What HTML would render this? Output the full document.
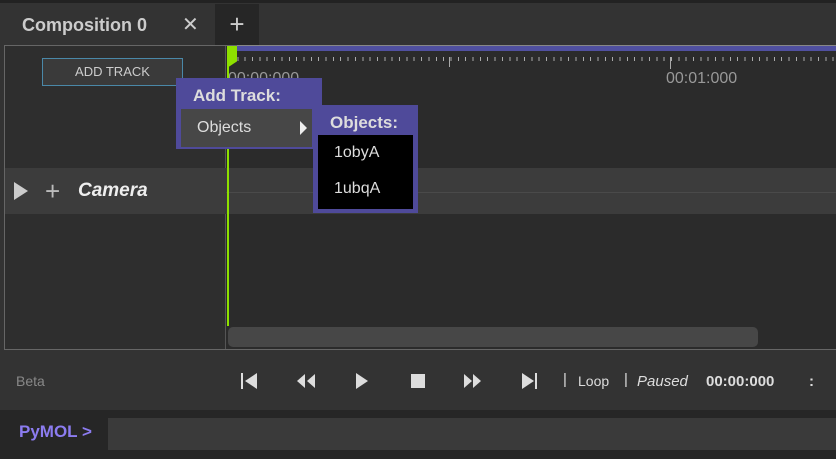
<!DOCTYPE html>
<html><head><style>
*{margin:0;padding:0;box-sizing:border-box}
body{width:836px;height:459px;background:#333;font-family:"Liberation Sans",sans-serif;position:relative;overflow:hidden}
.a{position:absolute}
</style></head><body>
<div class="a" style="left:0;top:0;width:836px;height:3px;background:#222"></div>
<div class="a" style="left:4px;top:3px;width:210px;height:42px;background:#333;color:#ccc;font-weight:bold;font-size:18px;line-height:44px;padding-left:18px">Composition 0<span class="a" style="left:178px;top:0;font-weight:normal;font-size:20px;color:#ccc">✕</span></div>
<div class="a" style="left:215px;top:4px;width:44px;height:41px;background:#262626;color:#ccc;font-size:26px;line-height:40px;text-align:center">+</div>
<div class="a" style="left:4px;top:45px;width:832px;height:305px;border:1px solid #666;border-right:none;background:#2e2e2e"></div>
<div class="a" style="left:225px;top:46px;width:611px;height:303px;background:#2b2b2b;border-left:1px solid #555"></div>
<div class="a" style="left:5px;top:168px;width:831px;height:46px;background:#3c3c3c"></div>
<div class="a" style="left:226px;top:192px;width:610px;height:1px;background:#4a4a4a"></div>
<div class="a" style="left:237px;top:45px;width:599px;height:6px;background:#5050a0;border-top:1px solid #888"></div>
<div class="a" style="left:230px;top:57px;width:606px;height:4px;background:repeating-linear-gradient(90deg,#aaa 0 1px,transparent 1px 7.35px)"></div>
<div class="a" style="left:449px;top:57px;width:1px;height:10px;background:#aaa"></div>
<div class="a" style="left:670px;top:57px;width:1px;height:12px;background:#aaa"></div>
<div class="a" style="left:228px;top:70px;color:#999;font-size:16px">00:00:000</div>
<div class="a" style="left:666px;top:70px;color:#999;font-size:16px">00:01:000</div>
<div class="a" style="left:227px;top:46px;width:10px;height:22px;background:#8ee000;clip-path:polygon(0 0,100% 0,100% 70%,0 100%)"></div>
<div class="a" style="left:227px;top:46px;width:2px;height:280px;background:#8ee000"></div>
<div class="a" style="left:226px;top:326px;width:610px;height:23px;background:#2b2b2b"></div>
<div class="a" style="left:228px;top:327px;width:530px;height:20px;background:#474747;border-radius:5px"></div>
<div class="a" style="left:42px;top:58px;width:141px;height:28px;border:1px solid #4a88a8;background:#3a3a3a;color:#ccc;font-size:13px;line-height:26px;text-align:center">ADD TRACK</div>
<div class="a" style="left:14px;top:182px;width:0;height:0;border-left:14px solid #ccc;border-top:9px solid transparent;border-bottom:9px solid transparent"></div>
<div class="a" style="left:45px;top:176px;color:#bbb;font-size:26px;line-height:30px">+</div>
<div class="a" style="left:78px;top:180px;color:#eee;font-size:19px;font-weight:bold;font-style:italic">Camera</div>
<div class="a" style="left:176px;top:78px;width:146px;height:71px;background:#4f4a9a"></div>
<div class="a" style="left:193px;top:86px;color:#ddd;font-weight:bold;font-size:17px">Add Track:</div>
<div class="a" style="left:181px;top:109px;width:131px;height:38px;background:#474747;color:#ddd;font-size:16px;line-height:38px;padding-left:16px">Objects</div>
<div class="a" style="left:300px;top:121px;width:0;height:0;border-left:7px solid #eee;border-top:7px solid transparent;border-bottom:7px solid transparent"></div>
<div class="a" style="left:313px;top:105px;width:105px;height:108px;background:#4f4a9a"></div>
<div class="a" style="left:330px;top:113px;color:#ddd;font-weight:bold;font-size:17px">Objects:</div>
<div class="a" style="left:318px;top:135px;width:95px;height:74px;background:#000;color:#ddd;font-size:16px;padding-left:16px;line-height:36px">1obyA<br>1ubqA</div>
<div class="a" style="left:0;top:350px;width:836px;height:60px;background:#333"></div>
<div class="a" style="left:16px;top:373px;color:#888;font-size:14px">Beta</div>
<svg class="a" style="left:238px;top:370px" width="600" height="24" viewBox="0 0 600 24" fill="#ddd">
<rect x="3" y="3" width="2" height="16"/><polygon points="19,3 19,19 7,11"/>
<polygon points="67,4 67,18 59,11"/><polygon points="77,4 77,18 69,11"/>
<polygon points="118,3 118,19 130,11"/>
<rect x="173" y="4" width="14" height="14"/>
<polygon points="226,4 226,18 234,11"/><polygon points="235,4 235,18 243,11"/>
<polygon points="284,3 284,19 296,11"/><rect x="297" y="3" width="2" height="16"/>
</svg>
<div class="a" style="left:563px;top:371px;color:#ddd;font-size:15px">|</div>
<div class="a" style="left:578px;top:373px;color:#ddd;font-size:14px">Loop</div>
<div class="a" style="left:624px;top:371px;color:#ddd;font-size:15px">|</div>
<div class="a" style="left:637px;top:373px;color:#ddd;font-size:15px;font-style:italic">Paused</div>
<div class="a" style="left:706px;top:373px;color:#ddd;font-size:15px;font-weight:bold">00:00:000</div>
<div class="a" style="left:809px;top:373px;color:#ddd;font-size:15px;font-weight:bold">:</div>
<div class="a" style="left:0;top:410px;width:836px;height:49px;background:#262626"></div>
<div class="a" style="left:19px;top:422px;color:#8c7cf0;font-size:17px;font-weight:bold">PyMOL &gt;</div>
<div class="a" style="left:108px;top:418px;width:728px;height:32px;background:#3a3a3a"></div>
</body></html>
